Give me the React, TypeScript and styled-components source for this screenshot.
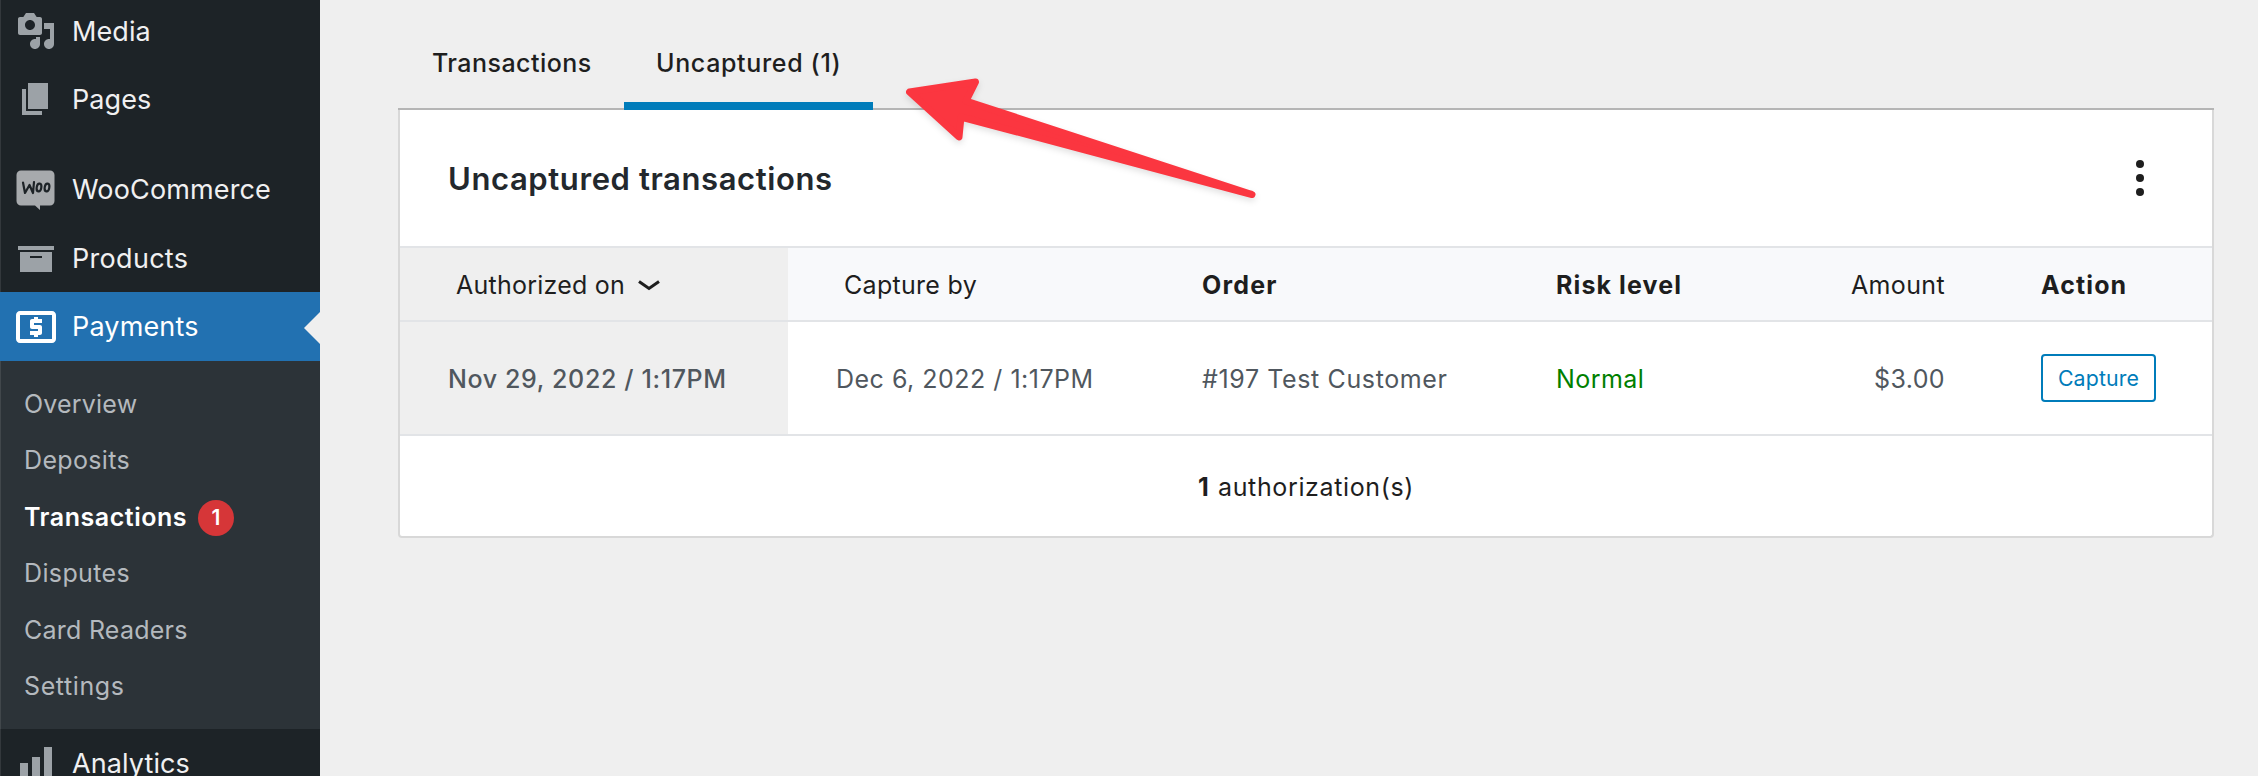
import React from "react";
import styled, { createGlobalStyle, css } from "styled-components";

const GlobalStyle = createGlobalStyle`
  * { box-sizing: border-box; }
  html, body { margin: 0; background: #efefef; overflow: hidden; }
  body { font-family: Inter, "Liberation Sans", sans-serif; font-size: 25px; color: #1e1e1e; }
`;

const Page = styled.div`
  position: relative;
  display: flex;
  width: 2258px;
  height: 776px;
  overflow: hidden;
  background: #efefef;
`;

const Sidebar = styled.nav`
  width: 320px;
  height: 776px;
  flex: none;
  overflow: hidden;
  background: #1d2327;
  box-shadow: inset 1px 0 0 #33383c;
`;

const Menu = styled.div`
  display: flex;
  flex-direction: column;
  margin-top: -3.2px;
`;

const Label = styled.span<{ $track?: number }>`
  letter-spacing: ${(p) => p.$track ?? 0}px;
  line-height: 36px;
  white-space: nowrap;
`;

const MenuItem = styled.a<{ $active?: boolean }>`
  display: flex;
  flex: none;
  align-items: center;
  height: 68.4px;
  color: ${(p) => (p.$active ? "#fff" : "#f0f0f1")};
  background: ${(p) => (p.$active ? "#2271b1" : "transparent")};
  font-size: 27px;
  ${Label} { flex: 1; padding-top: 1px; }
`;

const ActiveNotch = styled.span`
  border: 16px solid transparent;
  border-left-width: 0;
  border-right-color: #efefef;
  margin-top: 3px;
`;

const MenuIcon = styled.span<{ $active?: boolean }>`
  display: flex;
  justify-content: center;
  width: 72px;
  color: ${(p) => (p.$active ? "#fff" : "#9ca2a7")};
  svg { display: block; fill: currentColor; }
`;

const Separator = styled.div`
  flex: none;
  height: 22px;
`;

const Submenu = styled.div`
  display: flex;
  flex: none;
  flex-direction: column;
  height: 368.4px;
  padding: 15px 24px;
  background: #2c3338;
  box-shadow: inset 1px 0 0 #41474b;
`;

const SubItem = styled.a<{ $current?: boolean }>`
  display: flex;
  align-items: center;
  gap: 11px;
  height: 56.4px;
  color: ${(p) => (p.$current ? "#fff" : "#b4b9be")};
  font-weight: ${(p) => (p.$current ? 600 : 400)};
`;

const Badge = styled.span`
  display: flex;
  align-items: center;
  justify-content: center;
  width: 36px;
  height: 36px;
  margin-top: 2px;
  border-radius: 18px;
  background: #d63638;
  color: #fff;
  font-size: 21px;
  font-weight: 600;
`;

const Main = styled.main`
  display: flex;
  flex: 1;
  flex-direction: column;
  padding: 18px 44px 0 78px;
`;

const Tabs = styled.div`
  display: flex;
  height: 92px;
  padding-left: 2px;
  box-shadow: inset 0 -2px 0 #b5b5b5;
`;

const Tab = styled.button<{ $active?: boolean; $width: number }>`
  display: flex;
  align-items: center;
  width: ${(p) => p.$width}px;
  padding: 0 0 2px 32px;
  border: 0;
  background: none;
  color: #1e1e1e;
  font: 500 25px Inter, sans-serif;
  box-shadow: ${(p) => (p.$active ? "inset 0 -8px 0 #007cba" : "none")};
`;

const Card = styled.section`
  display: flex;
  flex-direction: column;
  border: 2px solid #d8d8d8;
  border-top: 0;
  border-radius: 0 0 4px 4px;
  background: #fff;
`;

const CardHeader = styled.header`
  display: flex;
  align-items: center;
  justify-content: space-between;
  height: 136px;
  padding: 0 68px 0 48px;
`;

const Title = styled.h2`
  margin: 0;
  color: #23282d;
  font-size: 31px;
  font-weight: 600;
`;

const MenuDots = styled.button`
  display: flex;
  flex-direction: column;
  gap: 6px;
  padding: 0;
  border: 0;
  background: none;
`;

const Dot = styled.i`
  width: 8px;
  height: 8px;
  border-radius: 50%;
  background: #1e1e1e;
`;

const Table = styled.div`
  display: grid;
  grid-template-columns: 388px 366px 354px 264px 221px 219px;
  grid-template-rows: 74px 114px;
`;

const Cell = styled.div<{ $sorted?: boolean; $right?: boolean }>`
  display: flex;
  align-items: center;
  justify-content: ${(p) => (p.$right ? "flex-end" : "flex-start")};
  padding: 2px 48px 0;
  border-top: 2px solid #e2e4e7;
`;

const HeadCell = styled(Cell)<{ $bold?: boolean; $indent?: boolean }>`
  gap: 13px;
  padding-left: ${(p) => (p.$indent ? 56 : 48)}px;
  background: ${(p) => (p.$sorted ? "#efefef" : "#f8f9fb")};
  color: #1e1e1e;
  font-weight: ${(p) => (p.$bold ? 700 : 400)};
`;

const BodyCell = styled(Cell)<{ $low?: boolean }>`
  background: ${(p) => (p.$sorted ? "#efefef" : "#fff")};
  color: ${(p) => (p.$low ? "#008000" : "#50575e")};
  font-weight: ${(p) => (p.$sorted ? 500 : 400)};
`;

const ActionCell = styled(BodyCell)`
  padding-top: 0;
`;

const CaptureButton = styled.button`
  display: flex;
  align-items: center;
  justify-content: center;
  width: 115px;
  height: 48px;
  padding: 0;
  border: 2px solid #007cba;
  border-radius: 4px;
  background: #fff;
  color: #007cba;
  font: 400 21.3px Inter, sans-serif;
`;

const Summary = styled.footer`
  display: flex;
  align-items: center;
  justify-content: center;
  height: 102px;
  padding-top: 2px;
  border-top: 2px solid #e2e4e7;
  strong { margin-right: 1px; font-weight: 700; }
`;

const Pointer = styled.svg`
  position: absolute;
  left: 880px;
  top: 60px;
  filter: drop-shadow(0 3px 3px rgba(0, 0, 0, 0.12));
`;

const Dash = ({ d }: { d: string }) => (
  <svg width="40" height="40" viewBox="0 0 20 20">
    <path d={d} />
  </svg>
);

const MEDIA =
  "M13 11V4c0-.55-.45-1-1-1h-1.67L9 1H5L3.67 3H2c-.55 0-1 .45-1 1v7c0 .55.45 1 1 1h10c.55 0 1-.45 1-1zM7 4.5c1.38 0 2.5 1.12 2.5 2.5S8.38 9.5 7 9.5 4.5 8.38 4.5 7 5.62 4.5 7 4.5zM14 6h5v10.5c0 1.38-1.12 2.5-2.5 2.5S14 17.88 14 16.5s1.12-2.5 2.5-2.5c.17 0 .34.02.5.05V9h-3V6zm-4 8.05V13h2v3.5c0 1.38-1.12 2.5-2.5 2.5S7 17.88 7 16.5 8.12 14 9.5 14c.17 0 .34.02.5.05z";
const PAGES = "M6 15V2h10v13H6zm-1 1h8v2H3V5h2v11z";
const ARCHIVE = "M19 4v2H1V4h18zM2 7h16v10H2V7zm11 3V9H7v1h6z";
const CHART = "M18 18V2h-4v16h4zm-6 0V7H8v11h4zm-6 0v-8H2v8h4z";

const WooIcon = () => (
  <svg width="40" height="40" viewBox="0 0 40 40">
    <path fill="#a7aaad" d="M5 0.500h29a4.500 4.500 0 0 1 4.500 4.500v26a4.500 4.500 0 0 1-4.500 4.500h-10v4.500l-5-4.500H5A4.500 4.500 0 0 1 .5 31V5A4.500 4.500 0 0 1 5 .5z" />
    <g fill="none" stroke="#1d2327" strokeWidth="2.200" strokeLinecap="round" strokeLinejoin="round">
      <path d="M7 12.500l2 10.500 4.500-8 3.500 8 1-11" />
      <ellipse cx="23" cy="17.500" rx="2.300" ry="4" transform="rotate(10 23 17.500)" />
      <ellipse cx="31" cy="17.500" rx="2.300" ry="4" transform="rotate(10 31 17.500)" />
    </g>
  </svg>
);

const PaymentsIcon = () => (
  <svg width="48" height="48" viewBox="0 0 24 24">
    <path d="M11 17h2v-1h1c.55 0 1-.45 1-1v-3c0-.55-.45-1-1-1h-3v-1h4V8h-2V7h-2v1h-1c-.55 0-1 .45-1 1v3c0 .55.45 1 1 1h3v1H9v2h2v1zm9-13H4c-1.110 0-1.990.89-1.990 2L2 18c0 1.110.89 2 2 2h16c1.110 0 2-.89 2-2V6c0-1.110-.89-2-2-2zm0 14H4V6h16v12z" />
  </svg>
);

export default function App() {
  return (
    <Page>
      <GlobalStyle />
      <Sidebar>
        <Menu>
          <MenuItem><MenuIcon><Dash d={MEDIA} /></MenuIcon><Label $track={0.1}>Media</Label></MenuItem>
          <MenuItem><MenuIcon><Dash d={PAGES} /></MenuIcon><Label $track={0.1}>Pages</Label></MenuItem>
          <Separator />
          <MenuItem><MenuIcon><WooIcon /></MenuIcon><Label $track={0.14}>WooCommerce</Label></MenuItem>
          <MenuItem><MenuIcon><Dash d={ARCHIVE} /></MenuIcon><Label $track={0.3}>Products</Label></MenuItem>
          <MenuItem $active>
            <MenuIcon $active><PaymentsIcon /></MenuIcon>
            <Label $track={0.15}>Payments</Label>
            <ActiveNotch />
          </MenuItem>
          <Submenu>
            <SubItem><Label $track={0.2}>Overview</Label></SubItem>
            <SubItem><Label $track={0.35}>Deposits</Label></SubItem>
            <SubItem $current><Label $track={0.53}>Transactions</Label><Badge>1</Badge></SubItem>
            <SubItem><Label $track={0.38}>Disputes</Label></SubItem>
            <SubItem><Label $track={0.25}>Card Readers</Label></SubItem>
            <SubItem><Label $track={0.6}>Settings</Label></SubItem>
          </Submenu>
          <MenuItem><MenuIcon><Dash d={CHART} /></MenuIcon><Label $track={0.1}>Analytics</Label></MenuItem>
        </Menu>
      </Sidebar>
      <Main>
        <Tabs>
          <Tab $width={224}><Label $track={0.45}>Transactions</Label></Tab>
          <Tab $width={249} $active><Label $track={0.65}>Uncaptured (1)</Label></Tab>
        </Tabs>
        <Card>
          <CardHeader>
            <Title><Label $track={0.6}>Uncaptured transactions</Label></Title>
            <MenuDots aria-label="Choose which values to display"><Dot /><Dot /><Dot /></MenuDots>
          </CardHeader>
          <Table>
            <HeadCell $sorted $indent>
              <Label $track={0.24}>Authorized on</Label>
              <svg width="22" height="12" viewBox="0 0 22 12" fill="none" stroke="#1e1e1e" strokeWidth="3">
                <path d="M1 2.500l10 7 10-7" />
              </svg>
            </HeadCell>
            <HeadCell $indent><Label $track={0.3}>Capture by</Label></HeadCell>
            <HeadCell $bold><Label $track={1.2}>Order</Label></HeadCell>
            <HeadCell $bold><Label $track={1.1}>Risk level</Label></HeadCell>
            <HeadCell $right><Label $track={0.35}>Amount</Label></HeadCell>
            <HeadCell $bold><Label $track={1.1}>Action</Label></HeadCell>
            <BodyCell $sorted><Label $track={0.63}>Nov 29, 2022 / 1:17PM</Label></BodyCell>
            <BodyCell><Label $track={0.5}>Dec 6, 2022 / 1:17PM</Label></BodyCell>
            <BodyCell><Label $track={0.62}>#197 Test Customer</Label></BodyCell>
            <BodyCell $low><Label $track={0.45}>Normal</Label></BodyCell>
            <BodyCell $right><Label $track={0.4}>$3.00</Label></BodyCell>
            <ActionCell><CaptureButton><Label $track={0.15}>Capture</Label></CaptureButton></ActionCell>
          </Table>
          <Summary><Label $track={0.64}><strong>1</strong> authorization(s)</Label></Summary>
        </Card>
      </Main>
      <Pointer width="400" height="160" viewBox="0 0 400 160">
        <path
          d="M29.500 32L95.500 22L86 41L372 134.500L81 57L79 77Z"
          fill="#fb3640" stroke="#fb3640" strokeWidth="7" strokeLinejoin="round"
        />
      </Pointer>
    </Page>
  );
}
